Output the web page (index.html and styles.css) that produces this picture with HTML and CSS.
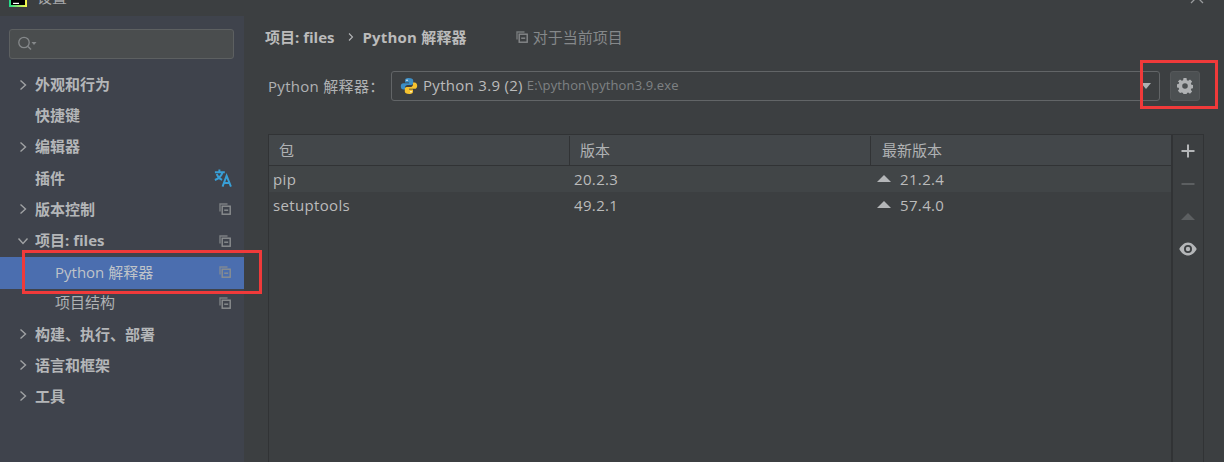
FILE: index.html
```html
<!DOCTYPE html>
<html lang="zh-CN">
<head>
<meta charset="utf-8">
<title>设置</title>
<link rel="stylesheet" href="styles.css">
</head>
<body>
<svg class="defs" width="0" height="0" aria-hidden="true">
  <defs>
    <symbol id="copy" viewBox="0 0 12 12">
      <path d="M8.500 1H1V8.500" fill="none" stroke="currentColor" stroke-width="1.400" opacity=".8"/>
      <rect x="3.200" y="3.200" width="8" height="8" fill="none" stroke="currentColor" stroke-width="1.400"/>
      <path d="M5.200 7.200h4" stroke="currentColor" stroke-width="1.400"/>
    </symbol>
    <symbol id="right" viewBox="0 0 10 12"><path d="M2.500 1.500L7.500 6L2.500 10.500" fill="none" stroke="currentColor" stroke-width="1.400"/></symbol>
    <symbol id="up" viewBox="0 0 14 7"><path d="M7 0L14 7H0Z" fill="currentColor"/></symbol>
  </defs>
</svg>
<header class="titlebar">
  <svg class="logo" width="18" height="18" viewBox="0 0 18 18"><defs><linearGradient id="lg" x1="0" y1="0" x2="1" y2="0"><stop offset="0" stop-color="#21d789"/><stop offset="1" stop-color="#fcf84a"/></linearGradient></defs><rect width="18" height="18" fill="url(#lg)"/><rect x="2" y="1" width="14" height="15" fill="#000"/><rect x="4" y="13.800" width="6" height="1.200" fill="#fff"/></svg>
  <span class="title-text">设置</span>
  <svg class="close" width="14" height="14" viewBox="0 0 14 14"><path d="M1 1L13 13M13 1L1 13" stroke="#9a9c9e" stroke-width="1.300"/></svg>
</header>
<div class="shell">
  <aside class="sidebar">
    <div class="search">
      <svg width="20" height="18" viewBox="0 0 20 18"><circle cx="7" cy="7.500" r="5.200" fill="none" stroke="#85888a" stroke-width="1.300"/><path d="M11 11.500L14 14.500" stroke="#85888a" stroke-width="1.500"/><path d="M14.500 7h5l-2.500 3z" fill="#85888a"/></svg>
    </div>
    <nav class="tree">
      <div class="row bold"><svg class="arrow"><use href="#right"/></svg><span class="label">外观和行为</span></div>
      <div class="row bold"><span class="label">快捷键</span></div>
      <div class="row bold"><svg class="arrow"><use href="#right"/></svg><span class="label">编辑器</span></div>
      <div class="row bold"><span class="label">插件</span>
        <svg class="trail translate" width="18" height="18" viewBox="0 0 20 20"><g fill="none" stroke="#389fd6" stroke-width="2.200"><path d="M1 3.500h11M6 .5v3M9.500 3.500C8.500 7.500 5 10.500 1 12.200M3 5.500c1 3 3.500 5.500 6 6.500"/><path d="M9.500 19.500L14 7.500l4.800 12M11 15.500h6.500"/></g></svg>
      </div>
      <div class="row bold"><svg class="arrow"><use href="#right"/></svg><span class="label">版本控制</span><svg class="trail copy"><use href="#copy"/></svg></div>
      <div class="row bold"><svg class="arrow down"><use href="#right"/></svg><span class="label">项目: files</span><svg class="trail copy"><use href="#copy"/></svg></div>
      <div class="row sub selected"><span class="label">Python 解释器</span><svg class="trail copy"><use href="#copy"/></svg></div>
      <div class="row sub"><span class="label">项目结构</span><svg class="trail copy"><use href="#copy"/></svg></div>
      <div class="row bold"><svg class="arrow"><use href="#right"/></svg><span class="label">构建、执行、部署</span></div>
      <div class="row bold"><svg class="arrow"><use href="#right"/></svg><span class="label">语言和框架</span></div>
      <div class="row bold"><svg class="arrow"><use href="#right"/></svg><span class="label">工具</span></div>
    </nav>
  </aside>
  <main class="main">
    <div class="crumbs">
      <span class="crumb">项目: files</span>
      <svg class="crumb-sep" width="6" height="8" viewBox="0 0 6 8"><path d="M1 .5L4.500 4L1 7.500" fill="none" stroke="#b4b6b8" stroke-width="1.100"/></svg>
      <span class="crumb">Python 解释器</span>
      <span class="scope"><svg class="scope-icon"><use href="#copy"/></svg>对于当前项目</span>
    </div>
    <div class="interp">
      <span class="interp-label">Python 解释器：</span>
      <div class="combo">
        <svg class="py" width="18" height="18" viewBox="0 0 18 18"><path d="M8.800 1C5.500 1 5 2.300 5 3.500V5.500h4v.7H3.500C1.800 6.200.8 7.400.8 9.300c0 2 1 3.300 2.700 3.300H5v-2c0-1.500 1.200-2.600 2.700-2.600h3.500c1.200 0 2-.9 2-2V3.500C13.200 2 11.800 1 8.800 1z" fill="#3d8fc6"/><path d="M9.200 17c3.300 0 3.800-1.300 3.800-2.500v-2H9v-.7h5.500c1.700 0 2.700-1.200 2.700-3.100 0-2-1-3.300-2.700-3.300H13v2c0 1.500-1.200 2.600-2.700 2.600H6.800c-1.200 0-2 .9-2 2v2.500C4.800 16 6.200 17 9.200 17z" fill="#f5c22f"/><circle cx="7" cy="3.300" r=".8" fill="#fff"/><circle cx="11" cy="14.700" r=".8" fill="#fff"/></svg>
        <span class="py-name">Python 3.9 (2)</span>
        <span class="py-path">E:\python\python3.9.exe</span>
        <svg class="combo-arrow" width="10" height="6" viewBox="0 0 10 6"><path d="M0 0h10L5 6z" fill="#aeb0b2"/></svg>
      </div>
      <button class="gear" type="button" aria-label="设置">
        <svg width="16" height="16" viewBox="0 0 16 16"><path fill-rule="evenodd" fill="#afb1b3" d="M6.500 0h3l.4 2.200 1.300.6L13 1.500l2.100 2.100-1.300 1.800.6 1.300 2.200.4v3l-2.200.4-.6 1.300 1.300 1.800-2.100 2.100-1.800-1.300-1.300.6-.4 2.200h-3l-.4-2.200-1.300-.6L3 14.900.9 12.800l1.300-1.800-.6-1.300-2.200-.4v-3l2.200-.4.600-1.300L.9 3.600 3 1.500l1.800 1.300 1.300-.6zM8 5.200a2.800 2.800 0 1 0 0 5.600 2.800 2.800 0 0 0 0-5.600z"/></svg>
      </button>
    </div>
    <section class="pkg-wrap">
      <div class="pkg-table">
        <div class="cell-grid head">
          <span class="h-cell">包</span><span class="h-cell">版本</span><span class="h-cell">最新版本</span>
        </div>
        <div class="cell-grid data alt">
          <span class="d-cell">pip</span><span class="d-cell">20.2.3</span><span class="d-cell latest"><svg class="up"><use href="#up"/></svg>21.2.4</span>
        </div>
        <div class="cell-grid data">
          <span class="d-cell">setuptools</span><span class="d-cell">49.2.1</span><span class="d-cell latest"><svg class="up"><use href="#up"/></svg>57.4.0</span>
        </div>
      </div>
      <div class="tools">
        <svg width="16" height="16" viewBox="0 0 16 16"><path d="M8 1.500v13M1.500 8h13" stroke="#b4b6b8" stroke-width="2"/></svg>
        <svg width="16" height="16" viewBox="0 0 16 16"><path d="M1.500 8h13" stroke="#5c5f61" stroke-width="2"/></svg>
        <svg width="16" height="16" viewBox="0 0 16 16"><path d="M8 4l7 7H1z" fill="#5c5f61"/></svg>
        <svg width="18" height="16" viewBox="0 0 18 16"><path fill-rule="evenodd" fill="#b4b6b8" d="M9 1.500C5 1.500 1.800 5 .3 8 1.800 11 5 14.500 9 14.500s7.200-3.500 8.700-6.500C16.200 5 13 1.500 9 1.500zM9 4a4 4 0 1 1 0 8 4 4 0 0 1 0-8zM9 5.800a2.200 2.200 0 1 0 0 4.400 2.200 2.200 0 0 0 0-4.400z"/></svg>
      </div>
    </section>
  </main>
</div>
<div class="mark mark-gear"></div>
<div class="mark mark-row"></div>
</body>
</html>
```
FILE: styles.css
```css
* { box-sizing: border-box; }
html, body { height: 100%; }
body {
  margin: 0;
  overflow: hidden;
  background: #3c3f41;
  color: #bbbbbb;
  font-family: "Open Sans", "Noto Sans CJK SC", sans-serif;
  font-size: 15px;
  display: flex;
  flex-direction: column;
}
.defs { position: absolute; }
.titlebar {
  height: 16px;
  flex: none;
  display: flex;
  align-items: flex-end;
  padding: 0 20px 0 9px;
  overflow: hidden;
}
.logo { flex: none; margin-bottom: 9px; }
.title-text { margin: 0 0 9px 10px; color: #a5a7a9; line-height: 20px; flex: none; }
.close { margin: 0 0 12px auto; flex: none; }
.shell { flex: 1; display: flex; min-height: 0; }
.sidebar { width: 244px; flex: none; background: #3f434c; padding-top: 13px; }
.search {
  height: 30px;
  margin: 0 10px 0 9px;
  background: #4a4d4e;
  border: 1px solid #5d6061;
  border-radius: 3px;
  padding-left: 7px;
  display: flex;
  align-items: center;
}
.tree { margin-top: 11px; display: grid; grid-auto-rows: 31.2px; }
.row { display: flex; align-items: center; padding: 0 13px 2px 0; position: relative; }
.label { margin-left: 35px; padding-bottom: 2px; }
.arrow { position: absolute; left: 18px; width: 10px; height: 12px; color: #a0a2a4; }
.arrow.down { transform: rotate(90deg); }
.bold { font-weight: 700; color: #b4b6b8; }
.sub .label { margin-left: 55px; }
.sub { color: #b0b2b4; font-weight: 400; }
.selected { background: #4b6eaf; color: #bfc3c9; height: 32px; }
.trail { margin-left: auto; flex: none; }
.copy { width: 12px; height: 12px; color: #8b8e90; }
.translate { margin-right: -1px; }
.main { flex: 1; min-width: 0; padding: 0 20px 0 24px; }
.crumbs { height: 43px; display: flex; align-items: center; padding-bottom: 2px; }
.crumb { font-weight: 700; color: #bbbbbb; margin-left: -3px; }
.crumb + .crumb-sep + .crumb { letter-spacing: .2px; }
.crumb-sep { margin: 0 11px 0 14px; }
.scope { margin-left: 49px; color: #85888a; display: flex; align-items: center; }
.scope-icon { width: 12px; height: 12px; margin-right: 5px; color: #85888a; }
.interp { margin-top: 12px; height: 30px; display: flex; align-items: center; }
.interp-label { width: 123px; flex: none; color: #b0b2b4; padding-bottom: 2px; letter-spacing: .3px; }
.combo {
  width: 769px;
  height: 30px;
  flex: none;
  border: 1px solid #626567;
  border-radius: 3px;
  display: flex;
  align-items: center;
  padding: 0 8px;
}
.py { flex: none; }
.py-name { margin-left: 5px; color: #bbbbbb; padding-bottom: 2px; letter-spacing: .3px; }
.py-path { margin-left: 4px; font-size: 13px; color: #7f8284; padding-bottom: 2px; letter-spacing: .12px; }
.combo-arrow { margin-left: auto; flex: none; }
.gear {
  width: 30px;
  height: 30px;
  margin-left: 10px;
  flex: none;
  padding: 0;
  background: #4c5052;
  border: 1px solid #55585a;
  border-radius: 3px;
  display: flex;
  align-items: center;
  justify-content: center;
}
.pkg-wrap { margin-top: 33px; height: 340px; display: flex; border: 1px solid #313335; width: 936px; }
.pkg-table { width: 904px; flex: none; border-right: 2px solid #313335; }
.cell-grid { display: grid; grid-template-columns: 300px 301px 1fr; }
.head { height: 31px; background: #43474a; border-bottom: 1px solid #313335; align-items: center; }
.h-cell { padding-left: 10px; height: 29px; line-height: 28px; border-left: 1px solid #313335; color: #b0b2b4; }
.h-cell:first-child { border-left: 0; }
.h-cell:last-child { padding-left: 11px; }
.data { height: 26px; align-items: center; }
.alt { background: #414547; }
.d-cell { padding-left: 4px; padding-bottom: 1px; letter-spacing: .35px; }
.d-cell + .d-cell { padding-left: 5px; }
.latest { display: flex; align-items: center; gap: 9px; }
.d-cell.latest { padding-left: 7px; }
.up { width: 14px; height: 7px; color: #b4b6b8; }
.tools { flex: 1; display: grid; grid-auto-rows: 32.7px; justify-items: center; align-items: center; align-content: start; }
.mark { position: absolute; border: 3px solid #f03a3a; }
.mark-gear { left: 1140px; top: 60px; width: 78px; height: 49px; }
.mark-row { left: 22px; top: 250px; width: 240px; height: 44px; }
```
